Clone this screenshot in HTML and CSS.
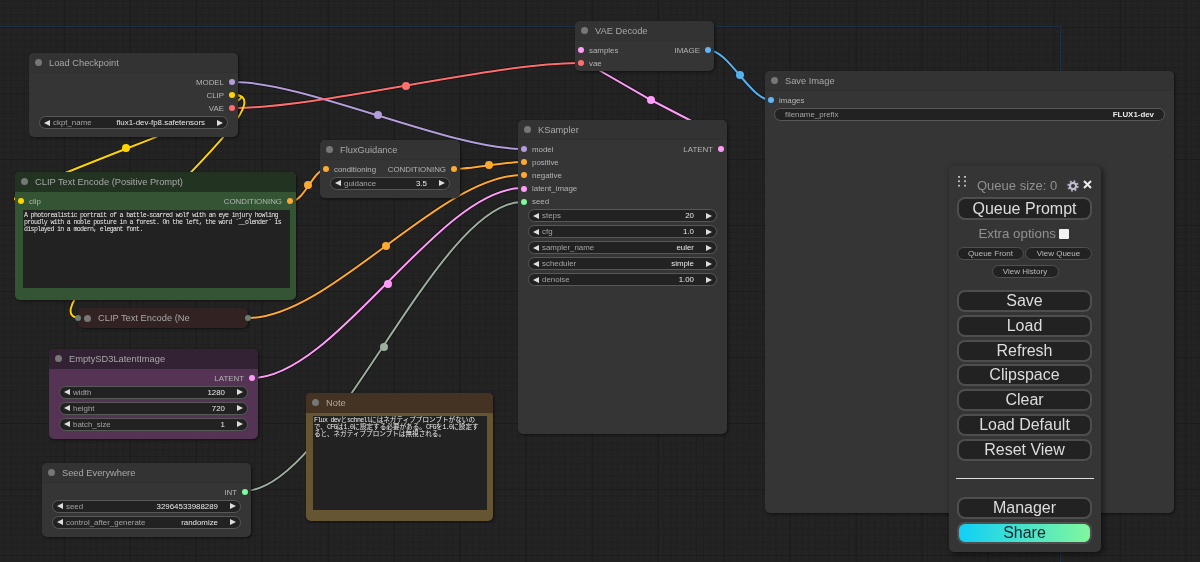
FILE: index.html
```html
<!DOCTYPE html>
<html lang="en">
<head>
<meta charset="utf-8">
<title>ComfyUI</title>
<link rel="stylesheet" href="styles.css">
</head>
<body>
<main class="canvas">
  <svg class="wires" width="1200" height="562" viewBox="0 0 1200 562" fill="none">
    <path class="guide" d="M0 26.5H1060.5V562"/>
    <g class="shadow">
      <path d="M234 82C306 82 450 149 522 149"/>
      <path d="M234 108C320 108 493 63 579 63"/>
      <path d="M234 95C293 95 -37 201 22 201"/>
      <path d="M234 95C302 95 13 318 81 318"/>
      <path d="M248 318C330 318 440 175 522 175"/>
      <path d="M292 201C304 201 314 169 326 169"/>
      <path d="M454 169C471 169 505 162 522 162"/>
      <path d="M252 378C335 378 439 188 522 188"/>
      <path d="M244 491C330 491 436 202 522 202"/>
      <path d="M590 65L651 100L705 128"/>
      <path d="M708 50C729 50 750 100 771 100"/>
    </g>
    <g class="w-purple"><path d="M234 82C306 82 450 149 522 149"/><circle cx="378" cy="115" r="3"/></g>
    <g class="w-red"><path d="M234 108C320 108 493 63 579 63"/><circle cx="406" cy="86" r="3"/></g>
    <g class="w-yellow"><path d="M234 95C293 95 -37 201 22 201"/><path d="M234 95C302 95 13 318 81 318"/><circle cx="126" cy="148" r="3"/></g>
    <g class="w-orange"><path d="M248 318C330 318 440 175 522 175"/><circle cx="386" cy="246" r="3"/><path d="M292 201C304 201 314 169 326 169"/><circle cx="308" cy="185" r="3"/><path d="M454 169C471 169 505 162 522 162"/><circle cx="489" cy="165" r="3"/></g>
    <g class="w-pink"><path d="M252 378C335 378 439 188 522 188"/><circle cx="388" cy="284" r="3"/><path d="M590 65L651 100L705 128"/><circle cx="651" cy="100" r="3"/></g>
    <g class="w-sage"><path d="M244 491C330 491 436 202 522 202"/><circle cx="384" cy="347" r="3"/></g>
    <g class="w-blue"><path d="M708 50C729 50 750 100 771 100"/><circle cx="740" cy="75" r="3"/></g>
  </svg>

  <section class="node n-load">
    <header class="title"><i class="lamp"></i>Load Checkpoint</header>
    <div class="slots">
      <div class="slot out"><span>MODEL</span><i class="dot purple"></i></div>
      <div class="slot out"><span>CLIP</span><i class="dot yellow"></i></div>
      <div class="slot out"><span>VAE</span><i class="dot red"></i></div>
    </div>
    <div class="widgets">
      <div class="widget"><i class="arrow left"></i><span class="name">ckpt_name</span><b class="value">flux1-dev-fp8.safetensors</b><i class="arrow right"></i></div>
    </div>
  </section>

  <section class="node n-flux">
    <header class="title"><i class="lamp"></i>FluxGuidance</header>
    <div class="slots">
      <div class="slot both"><i class="dot orange"></i><span>conditioning</span><span class="push">CONDITIONING</span><i class="dot orange"></i></div>
    </div>
    <div class="widgets">
      <div class="widget"><i class="arrow left"></i><span class="name">guidance</span><b class="value">3.5</b><i class="arrow right"></i></div>
    </div>
  </section>

  <section class="node n-pos green">
    <header class="title"><i class="lamp"></i>CLIP Text Encode (Positive Prompt)</header>
    <div class="slots">
      <div class="slot both"><i class="dot yellow"></i><span>clip</span><span class="push">CONDITIONING</span><i class="dot orange"></i></div>
    </div>
    <div class="prompt prompt-pos">A photorealistic portrait of a battle-scarred wolf with an eye injury howling proudly with a noble posture in a forest. On the left, the word `__olender` is displayed in a modern, elegant font.</div>
  </section>

  <section class="node n-neg">
    <i class="lamp"></i><span class="neg-title">CLIP Text Encode (Ne</span>
    <i class="stub stub-l"></i><i class="stub stub-r"></i>
  </section>

  <section class="node n-empty plum">
    <header class="title"><i class="lamp"></i>EmptySD3LatentImage</header>
    <div class="slots">
      <div class="slot out"><span>LATENT</span><i class="dot pink"></i></div>
    </div>
    <div class="widgets">
      <div class="widget"><i class="arrow left"></i><span class="name">width</span><b class="value">1280</b><i class="arrow right"></i></div>
      <div class="widget"><i class="arrow left"></i><span class="name">height</span><b class="value">720</b><i class="arrow right"></i></div>
      <div class="widget"><i class="arrow left"></i><span class="name">batch_size</span><b class="value">1</b><i class="arrow right"></i></div>
    </div>
  </section>

  <section class="node n-seed">
    <header class="title"><i class="lamp"></i>Seed Everywhere</header>
    <div class="slots">
      <div class="slot out"><span>INT</span><i class="dot mint"></i></div>
    </div>
    <div class="widgets">
      <div class="widget"><i class="arrow left"></i><span class="name">seed</span><b class="value">32964533988289</b><i class="arrow right"></i></div>
      <div class="widget"><i class="arrow left"></i><span class="name">control_after_generate</span><b class="value">randomize</b><i class="arrow right"></i></div>
    </div>
  </section>

  <section class="node n-note brown">
    <header class="title"><i class="lamp"></i>Note</header>
    <div class="prompt prompt-note" lang="ja">Flux dev<span class="cjk">と</span>schnell<span class="cjk">にはネガティブプロンプトがないので、</span>CFG<span class="cjk">は</span>1.0<span class="cjk">に設定する必要がある。</span>CFG<span class="cjk">を</span>1.0<span class="cjk">に設定すると、ネガティブプロンプトは無視される。</span></div>
  </section>

  <section class="node n-vae">
    <header class="title"><i class="lamp"></i>VAE Decode</header>
    <div class="slots">
      <div class="slot both"><i class="dot pink"></i><span>samples</span><span class="push">IMAGE</span><i class="dot blue"></i></div>
      <div class="slot both"><i class="dot red"></i><span>vae</span></div>
    </div>
  </section>

  <section class="node n-ksampler">
    <header class="title"><i class="lamp"></i>KSampler</header>
    <div class="slots">
      <div class="slot both"><i class="dot purple"></i><span>model</span><span class="push">LATENT</span><i class="dot pink"></i></div>
      <div class="slot both"><i class="dot orange"></i><span>positive</span></div>
      <div class="slot both"><i class="dot orange"></i><span>negative</span></div>
      <div class="slot both"><i class="dot pink"></i><span>latent_image</span></div>
      <div class="slot both"><i class="dot mint"></i><span>seed</span></div>
    </div>
    <div class="widgets">
      <div class="widget"><i class="arrow left"></i><span class="name">steps</span><b class="value">20</b><i class="arrow right"></i></div>
      <div class="widget"><i class="arrow left"></i><span class="name">cfg</span><b class="value">1.0</b><i class="arrow right"></i></div>
      <div class="widget"><i class="arrow left"></i><span class="name">sampler_name</span><b class="value">euler</b><i class="arrow right"></i></div>
      <div class="widget"><i class="arrow left"></i><span class="name">scheduler</span><b class="value">simple</b><i class="arrow right"></i></div>
      <div class="widget"><i class="arrow left"></i><span class="name">denoise</span><b class="value">1.00</b><i class="arrow right"></i></div>
    </div>
  </section>

  <section class="node n-save">
    <header class="title"><i class="lamp"></i>Save Image</header>
    <div class="slots">
      <div class="slot both"><i class="dot blue"></i><span>images</span></div>
    </div>
    <div class="widgets">
      <div class="widget plain"><span class="name">filename_prefix</span><b class="value">FLUX1-dev</b></div>
    </div>
  </section>

  <aside class="menu">
    <div class="menu-head">
      <i class="grip"></i>
      <span class="queue-size">Queue size: 0</span>
      <svg class="gear" width="12" height="12" viewBox="0 0 12 12" fill="none"><circle cx="6" cy="6" r="4.6" stroke="#b5aec4" stroke-width="2.2" stroke-dasharray="1.8 1.8"/><circle cx="6" cy="6" r="3" stroke="#c4bdd2" stroke-width="2"/></svg>
      <svg class="close" width="9" height="9" viewBox="0 0 9 9" fill="none"><path d="M1 1L8 8M8 1L1 8" stroke="#eee" stroke-width="2"/></svg>
    </div>
    <button class="btn queue">Queue Prompt</button>
    <div class="extra"><span>Extra options</span><i class="check"></i></div>
    <div class="mini-row">
      <button class="mini">Queue Front</button>
      <button class="mini">View Queue</button>
    </div>
    <div class="mini-center"><button class="mini">View History</button></div>
    <div class="stack">
      <button class="btn">Save</button>
      <button class="btn">Load</button>
      <button class="btn">Refresh</button>
      <button class="btn">Clipspace</button>
      <button class="btn">Clear</button>
      <button class="btn">Load Default</button>
      <button class="btn">Reset View</button>
    </div>
    <hr class="rule">
    <div class="stack tight">
      <button class="btn">Manager</button>
      <button class="btn share">Share</button>
    </div>
  </aside>
</main>
</body>
</html>
```
FILE: styles.css
```css
* { box-sizing: border-box; }
html, body { margin: 0; height: 100%; overflow: hidden; }
body { font-family: "Liberation Sans", Arial, sans-serif; background: #222; }

.canvas {
  position: relative;
  width: 1200px;
  height: 562px;
  overflow: hidden;
  filter: blur(.4px);
  background-color: #232323;
  background-image:
    linear-gradient(90deg, #1c1c1c 1px, transparent 1px),
    linear-gradient(#1c1c1c 1px, transparent 1px),
    linear-gradient(90deg, #1f1f1f 1px, transparent 1px),
    linear-gradient(#1f1f1f 1px, transparent 1px);
  background-size: 66px 66px, 66px 66px, 6.6px 6.6px, 6.6px 6.6px;
  background-position: 64px 27px, 64px 27px, 4px 1px, 4px 1px;
}

.wires { position: absolute; left: 0; top: 0; }
.wires g { stroke-width: 2; }
.guide { stroke: #1d2f45; stroke-width: 1; }
.wires .shadow { stroke: rgba(0, 0, 0, .55); stroke-width: 3.4; }
.w-purple { stroke: #b39ddb; }
.w-purple circle { fill: #b39ddb; }
.w-red { stroke: #ff6e6e; }
.w-red circle { fill: #ff6e6e; }
.w-yellow { stroke: #ffd500; }
.w-yellow circle { fill: #ffd500; }
.w-orange { stroke: #ffa931; }
.w-orange circle { fill: #ffa931; }
.w-pink { stroke: #ff9cf9; }
.w-pink circle { fill: #ff9cf9; }
.w-sage { stroke: #9caf9f; }
.w-sage circle { fill: #9caf9f; }
.w-blue { stroke: #55b2ee; }
.w-blue circle { fill: #55b2ee; }

/* Nodes sit on a free canvas: their position is the content */
.node {
  position: absolute;
  background: #353535;
  border-radius: 5px;
  box-shadow: 1px 1px 3px rgba(0, 0, 0, .55);
  color: #b4b4b4;
  font-size: 7.9px;
}
.n-load { left: 29px; top: 53px; width: 209px; height: 84px; }
.n-flux { left: 320px; top: 140px; width: 140px; height: 58px; }
.n-pos { left: 15px; top: 172px; width: 281px; height: 128px; }
.n-neg { left: 78px; top: 308px; width: 170px; height: 20px; display: flex; align-items: center; padding-left: 6px; background: #332222; }
.n-empty { left: 49px; top: 349px; width: 209px; height: 90px; }
.n-seed { left: 42px; top: 463px; width: 209px; height: 74px; }
.n-note { left: 306px; top: 393px; width: 187px; height: 128px; }
.n-vae { left: 575px; top: 21px; width: 139px; height: 50px; }
.n-ksampler { left: 518px; top: 120px; width: 209px; height: 314px; }
.n-save { left: 765px; top: 71px; width: 409px; height: 442px; }

.title {
  display: flex;
  align-items: center;
  height: 20px;
  padding-left: 6px;
  background: #333;
  border-radius: 5px 5px 0 0;
  border-bottom: 1px solid #303030;
  color: #a8a8a8;
  font-size: 9.3px;
}
.lamp {
  flex: none;
  width: 7px;
  height: 7px;
  margin-right: 7px;
  border-radius: 50%;
  background: #777;
}
.neg-title { color: #a8a8a8; font-size: 9.3px; }

.green { background: #335533; }
.green .title { background: #223322; border-bottom-color: #223322; }
.plum { background: #553355; }
.plum .title { background: #332233; border-bottom-color: #332233; }
.brown { background: #665533; }
.brown .title { background: #443322; border-bottom-color: #443322; }

.slots { padding: 2.5px 3px 0; }
.slot { display: flex; align-items: center; gap: 5px; height: 13.2px; line-height: 13.2px; }
.slot.out { justify-content: flex-end; }
.push { margin-left: auto; }
.dot { flex: none; width: 6px; height: 6px; border-radius: 50%; }
.purple { background: #b39ddb; }
.yellow { background: #ffd500; }
.red { background: #ff6e6e; }
.orange { background: #ffa931; }
.pink { background: #ff9cf9; }
.mint { background: #7dfa9b; }
.blue { background: #64b5f6; }

.stub { position: absolute; top: 7px; width: 6px; height: 6px; border-radius: 50%; background: #6d7d6d; }
.stub-l { left: -3px; }
.stub-r { right: -3px; }

.widgets { display: flex; flex-direction: column; gap: 3px; padding: 1px 10px 0; }
.n-save .widgets { padding: 1px 9px 0; }
.widget {
  display: flex;
  align-items: center;
  height: 13px;
  padding: 0 4px;
  background: #222;
  border: 1px solid #585858;
  border-radius: 7px;
  font-size: 7.9px;
}
.widget.plain { padding: 0 10px; }
.name { color: #a4a4a4; margin-left: 3px; }
.widget.plain .name { margin-left: 0; }
.value { margin-left: auto; margin-right: 12px; color: #e8e8e8; font-weight: 400; }
.widget.plain .value { margin-right: 0; font-weight: 700; }
.arrow { flex: none; width: 0; height: 0; border-top: 3px solid transparent; border-bottom: 3px solid transparent; }
.arrow.left { border-right: 6px solid #ddd; }
.arrow.right { border-left: 6px solid #ddd; }

.prompt {
  background: #222;
  color: #eee;
  font-family: "Liberation Mono", "Noto Sans CJK JP", monospace;
  font-size: 6.6px;
  letter-spacing: -.66px;
  line-height: 7px;
  overflow: hidden;
}
.cjk { letter-spacing: 0; }
.prompt-pos { height: 78px; margin: 2.5px 6px 0 8px; padding: 1.5px 1px; }
.prompt-note { height: 94px; margin: 3px 6px 0 7px; padding: 1px 6px 1px 1px; }

/* Floating menu lies over the canvas */
.menu {
  position: absolute;
  left: 949px;
  top: 166px;
  width: 152px;
  height: 386px;
  padding: 8px 9px 0 8px;
  background: #353535;
  border-radius: 5px;
  box-shadow: 2px 2px 6px rgba(0, 0, 0, .55);
  color: #909090;
}
.menu-head { display: flex; align-items: center; height: 23px; }
.grip {
  flex: none;
  width: 8px;
  height: 13px;
  margin: -6px 11px 0 1px;
  background-image: radial-gradient(circle at 1px 1px, #bbb 1px, transparent 1.1px);
  background-size: 6px 4.4px;
}
.queue-size { font-size: 13px; white-space: nowrap; }
.gear { flex: none; margin-left: 10px; }
.close { flex: none; margin: -3px 0 0 4px; }

.btn {
  display: block;
  width: 100%;
  height: 22px;
  padding: 0;
  background: #222;
  border: 2px solid #4e4e4e;
  border-radius: 8px;
  color: #ddd;
  font: 16px/1 "Liberation Sans", Arial, sans-serif;
}
.queue { height: 23px; }
.extra { display: flex; align-items: center; justify-content: flex-end; gap: 3px; height: 27px; padding-right: 23px; font-size: 13.3px; }
.check { flex: none; width: 10px; height: 10px; background: #f2f2f2; border-radius: 1px; }
.mini-row { display: flex; justify-content: space-between; }
.mini-center { display: flex; justify-content: center; margin: 5px 0 0 1px; }
.mini {
  width: 67px;
  height: 13px;
  padding: 0;
  background: #222;
  border: 1px solid #505050;
  border-radius: 7px;
  color: #bbb;
  font: 8px/1 "Liberation Sans", Arial, sans-serif;
}
.stack { display: flex; flex-direction: column; gap: 2.8px; margin-top: 12px; }
.stack.tight { margin-top: 18px; }
.rule { height: 1px; margin: 17px -1.5px 0; background: #ddd; border: 0; }
.share { background: linear-gradient(90deg, #0fd0f7, #80f79c); color: #123; }
```
